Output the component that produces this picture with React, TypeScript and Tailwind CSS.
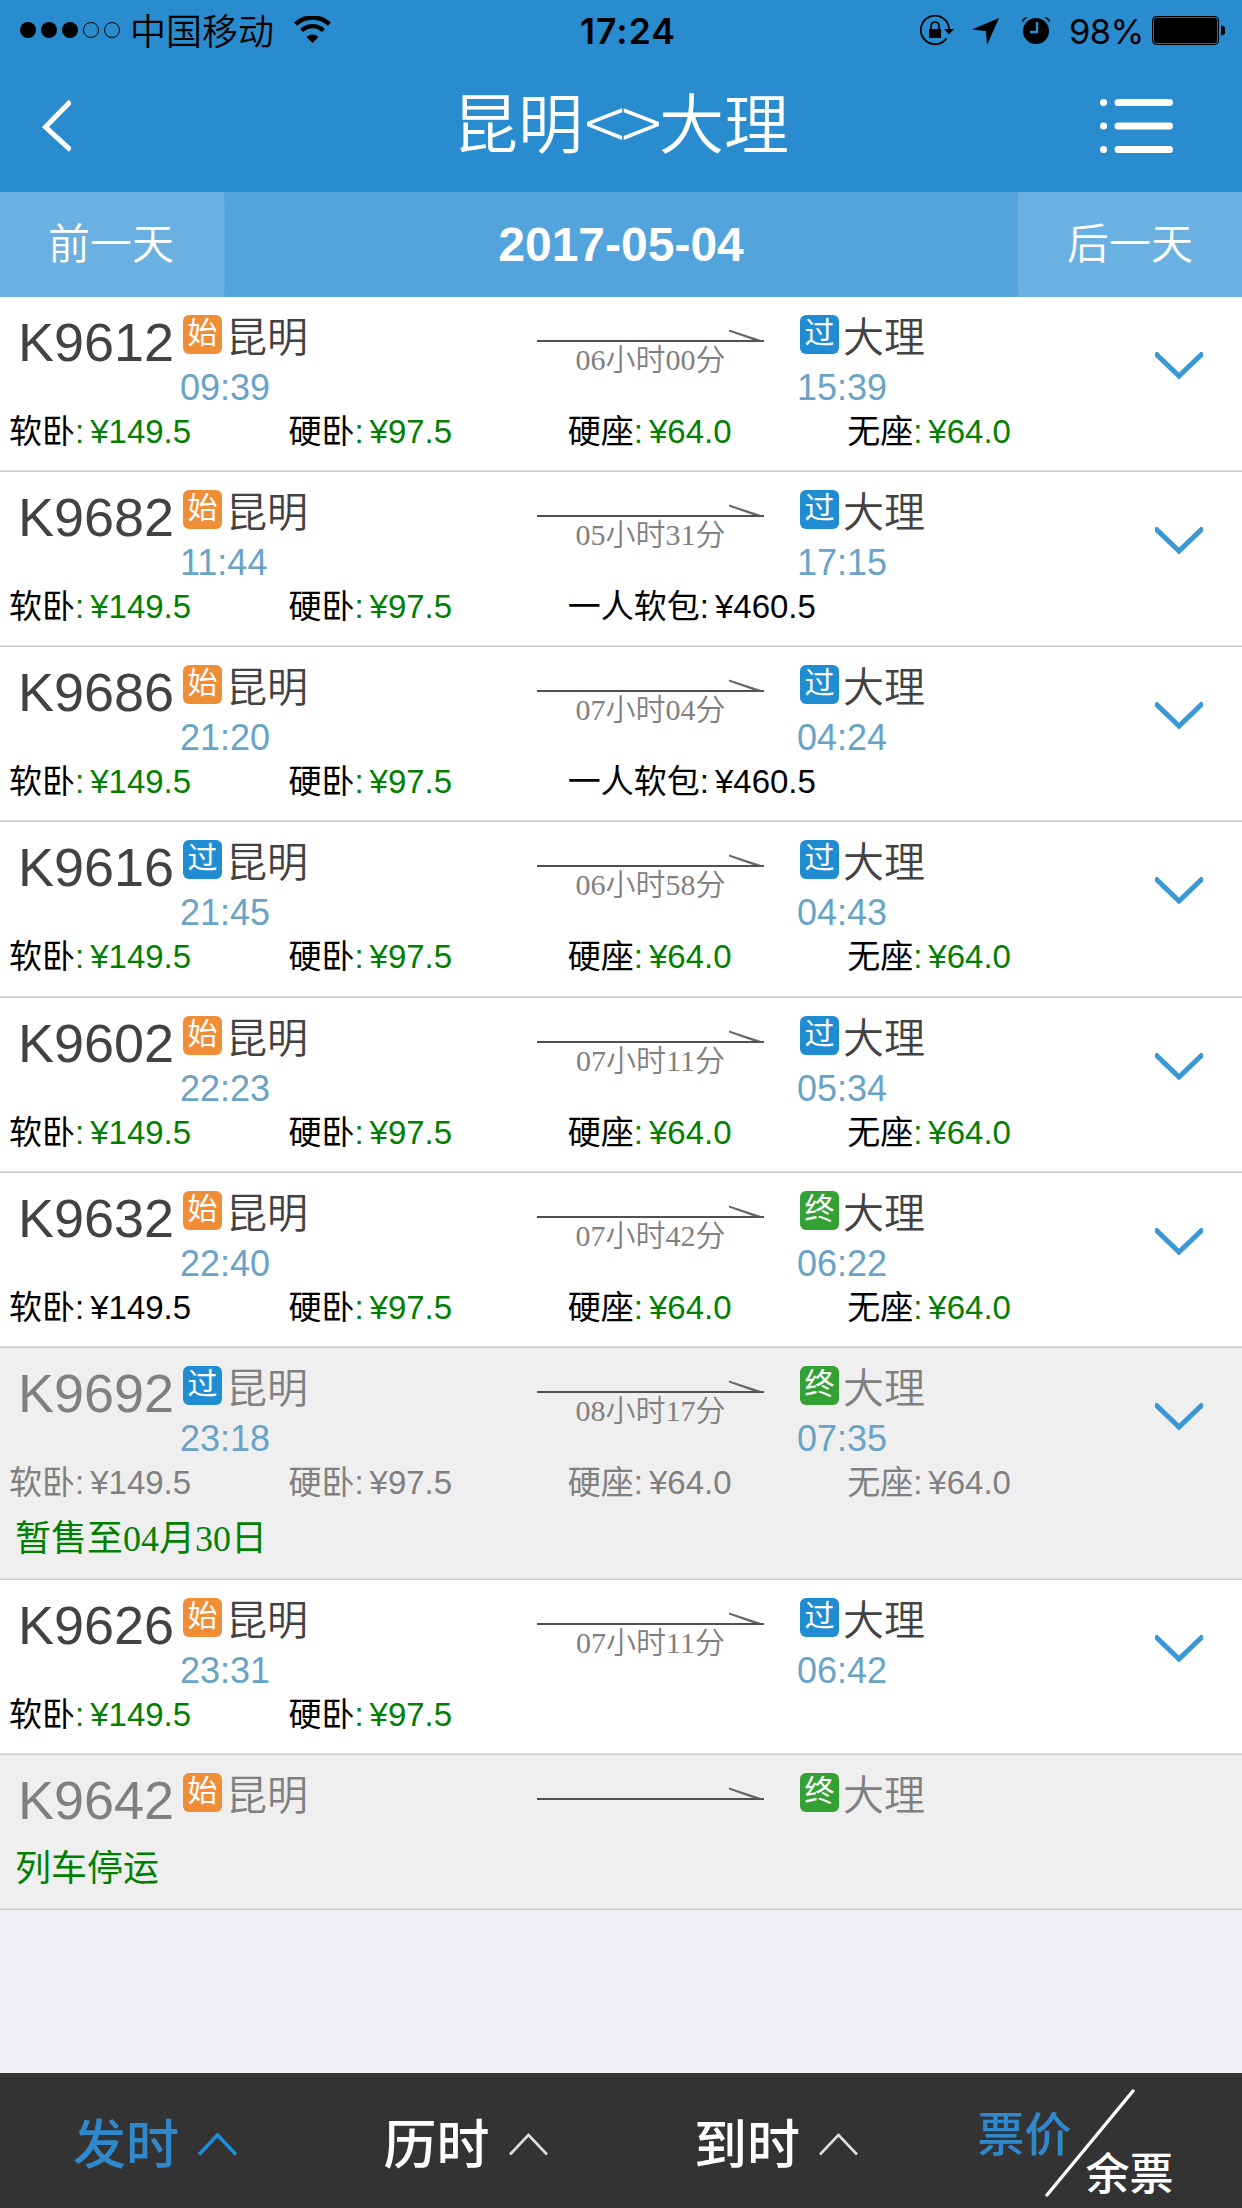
import React from 'react';
import clsx from 'clsx';

type StopKind = 'start' | 'pass' | 'end';
type PriceTone = 'green' | 'black' | 'gray';

interface Price {
  seat: string;
  value: string;
  tone?: PriceTone;
}

interface Train {
  no: string;
  from: StopKind;
  to: StopKind;
  depart?: string;
  arrive?: string;
  duration?: string;
  prices?: Price[];
  note?: string;
  disabled?: boolean;
}

const softSleeper: Price = { seat: '软卧', value: '¥149.5' };
const hardSleeper: Price = { seat: '硬卧', value: '¥97.5' };
const hardSeat: Price = { seat: '硬座', value: '¥64.0' };
const noSeat: Price = { seat: '无座', value: '¥64.0' };
const singleRoom: Price = { seat: '一人软包', value: '¥460.5', tone: 'black' };
const allSeats = [softSleeper, hardSleeper, hardSeat, noSeat];

const trains: Train[] = [
  { no: 'K9612', from: 'start', to: 'pass', depart: '09:39', arrive: '15:39', duration: '06小时00分', prices: allSeats },
  { no: 'K9682', from: 'start', to: 'pass', depart: '11:44', arrive: '17:15', duration: '05小时31分', prices: [softSleeper, hardSleeper, singleRoom] },
  { no: 'K9686', from: 'start', to: 'pass', depart: '21:20', arrive: '04:24', duration: '07小时04分', prices: [softSleeper, hardSleeper, singleRoom] },
  { no: 'K9616', from: 'pass', to: 'pass', depart: '21:45', arrive: '04:43', duration: '06小时58分', prices: allSeats },
  { no: 'K9602', from: 'start', to: 'pass', depart: '22:23', arrive: '05:34', duration: '07小时11分', prices: allSeats },
  { no: 'K9632', from: 'start', to: 'end', depart: '22:40', arrive: '06:22', duration: '07小时42分', prices: [{ ...softSleeper, tone: 'black' }, hardSleeper, hardSeat, noSeat] },
  { no: 'K9692', from: 'pass', to: 'end', depart: '23:18', arrive: '07:35', duration: '08小时17分', prices: allSeats, note: '暂售至04月30日', disabled: true },
  { no: 'K9626', from: 'start', to: 'pass', depart: '23:31', arrive: '06:42', duration: '07小时11分', prices: [softSleeper, hardSleeper] },
  { no: 'K9642', from: 'start', to: 'end', note: '列车停运', disabled: true },
];

const badges: Record<StopKind, { label: string; color: string }> = {
  start: { label: '始', color: 'bg-[#f08e38]' },
  pass: { label: '过', color: 'bg-[#208dd2]' },
  end: { label: '终', color: 'bg-[#33a133]' },
};

const tones: Record<PriceTone, string> = {
  green: 'text-[#008000]',
  black: 'text-black',
  gray: 'text-[#808080]',
};

const StatusBar: React.FC = () => (
  <div className="h-[60px] grid grid-cols-[1fr_auto_1fr] text-black text-[36px] leading-[62px]">
    <div className="flex items-start pl-5">
      <svg className="w-[100px] h-4 mt-[22px]" viewBox="0 0 100 16">
        <circle cx="8" cy="8" r="8" />
        <circle cx="29" cy="8" r="8" />
        <circle cx="50" cy="8" r="8" />
        <circle cx="71" cy="8" r="7.5" fill="none" stroke="#000" />
        <circle cx="92" cy="8" r="7.5" fill="none" stroke="#000" />
      </svg>
      <span className="ml-[10px] leading-[65px] font-[350]">中国移动</span>
      <svg className="w-[37px] h-[27px] mt-4 ml-5" viewBox="0 0 37 27">
        <path d="M1.6 8.2 A24.5 24.5 0 0 1 35.4 8.2" fill="none" stroke="#000" strokeWidth="4.4" />
        <path d="M7.6 14.6 A15.5 15.5 0 0 1 29.4 14.6" fill="none" stroke="#000" strokeWidth="4.2" />
        <path d="M12.6 21 A8.5 8.5 0 0 1 24.4 21 L18.5 27 Z" />
      </svg>
    </div>
    <span className="font-[Inter] font-semibold text-[35.5px] tracking-[1px] leading-[63px] pl-[14px]">17:24</span>
    <div className="flex items-start justify-end pr-[17px]">
      <svg className="w-[34px] h-[30px] mt-[15px]" viewBox="0 0 34 30">
        <path d="M26.6 23.2 A14.2 14.2 0 1 1 29.2 14" fill="none" stroke="#000" strokeWidth="1.8" />
        <path d="M24 14h10l-5 5.5z" />
        <rect x="9" y="14" width="12" height="9" />
        <path d="M11 15v-4a4 4 0 0 1 8 0v4" fill="none" stroke="#000" strokeWidth="1.7" />
      </svg>
      <svg className="w-[27px] h-[27px] ml-[18px] mt-[18px]" viewBox="0 0 27 27">
        <path d="M27 0 L15 27 L14 13 L0 11.5 Z" />
      </svg>
      <svg className="w-7 h-7 ml-[23px] mt-4" viewBox="0 0 28 28">
        <circle cx="14" cy="15" r="13" />
        <path d="M0 6.5 A5 5 0 0 1 5.5 1.2 Z M28 6.5 A5 5 0 0 0 22.5 1.2 Z" />
        <path d="M15 6v10H8" fill="none" stroke="#298ccf" strokeWidth="2.4" />
      </svg>
      <span className="ml-[19px] font-[Inter] text-[34.5px] leading-[63px] w-[75px] tracking-[-0.6px]">98%</span>
      <svg className="w-[73px] h-[29px] ml-[8px] mt-4" viewBox="0 0 73 29">
        <rect x="0.6" y="0.6" width="65.8" height="27.8" rx="4" fill="none" stroke="#000" strokeWidth="1.2" />
        <rect x="2" y="2" width="63" height="25" rx="2.5" />
        <path d="M69 9.5 A5 5 0 0 1 69 19.5 Z" />
      </svg>
    </div>
  </div>
);

const Header: React.FC = () => (
  <div className="h-[132px] grid grid-cols-[1fr_auto_1fr] text-white">
    <svg className="w-[29px] h-[52px] ml-[42px] mt-10" viewBox="0 0 29 52" fill="none" stroke="#fff" strokeWidth="5">
      <path d="M28.5 1.5 L3.5 27 L28.5 50" />
    </svg>
    <h1 className="flex text-[65px] leading-[131px] font-[350]">
      昆明<span className="w-[76px] flex justify-center text-[76px] leading-[118px] tracking-[-4px] font-['Noto_Sans_CJK_SC',sans-serif] font-extralight">&lt;&gt;</span>大理
    </h1>
    <svg className="w-[73px] h-[55px] mt-[39px] ml-auto mr-[69px]" viewBox="0 0 73 55" stroke="#fff" strokeWidth="7" strokeLinecap="round">
      <path d="M3.5 3.5h0.1M18 3.5h51.5M3.5 27h0.1M18 27h51.5M3.5 50.5h0.1M18 50.5h51.5" />
    </svg>
  </div>
);

const DateBar: React.FC = () => (
  <div className="h-[105px] flex text-white text-center text-[42px] leading-[102px] bg-[#6ab0e0]">
    <button className="w-[224px] pr-[2px] font-[350]">前一天</button>
    <div className="flex-1 bg-[#53a4dd]">
      <div className="h-full rounded-xl border border-[#6ab0e0]/70 border-y-transparent text-[48px] leading-[103px] font-bold">2017-05-04</div>
    </div>
    <button className="w-[224px] font-[350]">后一天</button>
  </div>
);

const Stop: React.FC<{ kind: StopKind; name: string; time?: string }> = ({ kind, name, time }) => (
  <div>
    <div className="flex">
      <span className={clsx('w-[39px] h-[39px] mt-[18px] ml-[3px] rounded-[6px] text-white text-[30px] leading-[35px] text-center', badges[kind].color)}>
        {badges[kind].label}
      </span>
      <span className="ml-1 text-[41px] h-[72px] leading-[82px] font-[350]">{name}</span>
    </div>
    {time && <div className="text-[36px] leading-[40px] -mt-px text-[#69a3c6]">{time}</div>}
  </div>
);

const TrainRow: React.FC<{ train: Train }> = ({ train }) => (
  <div
    className={clsx(
      'border-b border-[#c8c7cc] shadow-[inset_0_-1px_0_#e3e3e5]',
      train.disabled ? 'bg-[#efefef] text-[#808080]' : 'bg-white text-[#424242]',
      !train.note && 'h-[175.17px]',
      train.note && (train.prices ? 'h-[232px]' : 'h-[155px]')
    )}
  >
    <div className={clsx('flex', train.prices ? 'h-[112px]' : 'h-[85px]')}>
      <div className="w-[180px] pl-[18px] text-[54px] leading-[90px]">{train.no}</div>
      <div className="w-[357px]">
        <Stop kind={train.from} name="昆明" time={train.depart} />
      </div>
      <div className="w-[260px]">
        <svg className="w-[227px] h-4 mt-[30px]" viewBox="0 0 227 16" fill="none" stroke="#505050">
          <path d="M0 14h227" strokeWidth="2" />
          <path d="M192 2.5 L227 14 L216 13 L192 4.5 Z" fill="#666" stroke="none" />
        </svg>
        {train.duration && (
          <div className="w-[227px] text-center text-[30px] leading-[34px] text-[#808080] font-['Liberation_Serif','Noto_Sans_CJK_SC',serif] font-[350]">
            {train.duration}
          </div>
        )}
      </div>
      <div className="flex-1">
        <Stop kind={train.to} name="大理" time={train.arrive} />
      </div>
      {train.prices && (
        <svg className="w-12 h-7 mt-[55px] mr-[39px]" viewBox="0 0 48 28" fill="none" stroke="#3a98d5" strokeWidth="5">
          <path d="M0 1 L24 24 L48 1" />
        </svg>
      )}
    </div>
    {train.prices && (
      <div className="flex h-[50px] pl-[9px] text-[33px] leading-[46px]">
        {train.prices.map(p => (
          <div key={p.seat} className="w-[279.4px] flex whitespace-nowrap">
            <span className={train.disabled ? 'text-[#808080]' : 'text-black'}>{p.seat}</span>
            <span className={tones[train.disabled ? 'gray' : p.tone || 'green']}>
              :<span className="ml-[6px]">{p.value}</span>
            </span>
          </div>
        ))}
      </div>
    )}
    {train.note && (
      <div className="pl-[15px] h-[56px] text-[36px] leading-[59px] text-[#008000] font-['Liberation_Serif','Noto_Sans_CJK_SC',serif]">
        {train.note}
      </div>
    )}
  </div>
);

const SortTab: React.FC<{ label: string; active?: boolean }> = ({ label, active }) => (
  <button className={clsx('w-[310.5px] flex items-start pl-[73px]', active ? 'text-[#2f88cb]' : 'text-white')}>
    <span className="text-[53px] leading-[145px] font-medium">{label}</span>
    <svg className="w-[39px] h-[23px] ml-[19px] mt-[60px]" viewBox="0 0 39 23" fill="none" stroke={active ? '#218dd2' : '#ddd'} strokeWidth={active ? 3.6 : 2.6}>
      <path d="M1 21.5 L19.5 2 L38 21.5" />
    </svg>
  </button>
);

const BottomBar: React.FC = () => (
  <div className="h-[135px] bg-[#333333] flex">
    <SortTab label="发时" active />
    <SortTab label="历时" />
    <SortTab label="到时" />
    <button className="flex-1 flex items-start font-medium">
      <span className="ml-[46px] text-[47px] leading-[123px] text-[#2f88cb]">票价</span>
      <svg className="w-[90px] h-[108px] mt-4 -ml-[27px]" viewBox="0 0 90 108" stroke="#fff" strokeWidth="3.4" strokeLinecap="round">
        <path d="M2 106 L88 2" />
      </svg>
      <span className="-ml-[49px] text-[44px] leading-[204px] h-[135px] text-white">余票</span>
    </button>
  </div>
);

const App: React.FC = () => (
  <div className="w-[1242px] h-[2208px] overflow-hidden flex flex-col bg-[#efeff5] font-['Liberation_Sans','Noto_Sans_CJK_SC',sans-serif]">
    <div className="bg-[#298ccf]">
      <StatusBar />
      <Header />
    </div>
    <DateBar />
    <div className="flex-1">
      {trains.map(train => (
        <TrainRow key={train.no} train={train} />
      ))}
    </div>
    <BottomBar />
  </div>
);

export default App;
